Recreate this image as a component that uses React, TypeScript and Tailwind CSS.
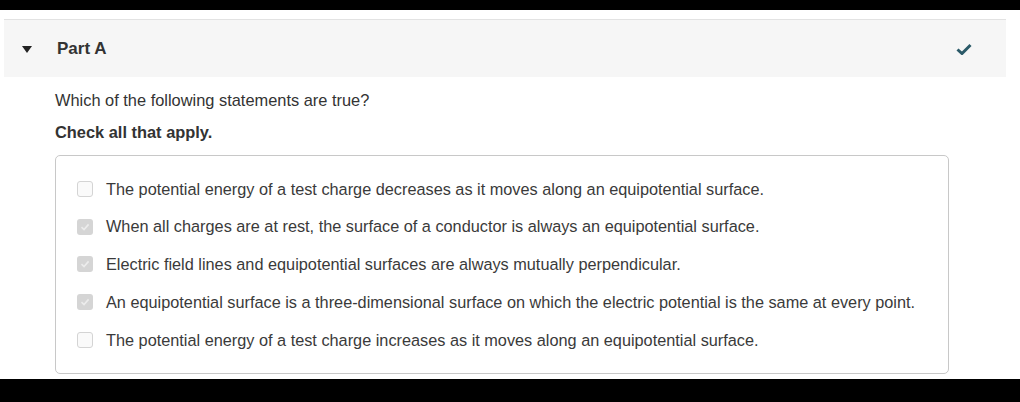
const options = [
  { text: 'The potential energy of a test charge decreases as it moves along an equipotential surface.', checked: false },
  { text: 'When all charges are at rest, the surface of a conductor is always an equipotential surface.', checked: true },
  { text: 'Electric field lines and equipotential surfaces are always mutually perpendicular.', checked: true },
  { text: 'An equipotential surface is a three-dimensional surface on which the electric potential is the same at every point.', checked: true },
  { text: 'The potential energy of a test charge increases as it moves along an equipotential surface.', checked: false },
];

function Box({ checked }: { checked: boolean }) {
  if (!checked) {
    return <span className="w-4 h-4 shrink-0 rounded-[3px] border border-[#d4d4d4] bg-[#fafafa]" />;
  }
  return (
    <span className="w-4 h-4 shrink-0 rounded-[3px] bg-[#d5d5d5] flex items-center justify-center">
      <svg viewBox="0 0 12 12" className="w-3 h-3">
        <path d="M2.5 6.2 L5 8.6 L9.6 3.4" fill="none" stroke="#ececec" strokeWidth="1.6" />
      </svg>
    </span>
  );
}

export default function App() {
  return (
    <div className="w-[1020px] h-[402px] bg-white flex flex-col font-['Liberation_Sans',Arial,sans-serif] text-[#333]">
      <div className="h-[10px] bg-black shrink-0" />
      <div className="flex-1 pt-[9px]">
        {/* collapsible part header */}
        <div className="ml-[4px] w-[1002px] h-[58px] bg-[#f6f6f6] border-t border-[#e2e2e2] flex items-center pl-[18px] pr-[34px]">
          <svg viewBox="0 0 10 7" className="w-[10px] h-[7px] mt-[1px]">
            <path d="M0 0 L10 0 L5 7 Z" fill="#222" />
          </svg>
          <span className="ml-[25px] text-[17px] font-bold text-[#333]">Part A</span>
          <svg viewBox="0 0 16 12" className="ml-auto w-[16px] h-[12px]">
            <path d="M1.5 6.5 L6 10.5 L14.5 2" fill="none" stroke="#2b5a68" strokeWidth="3" />
          </svg>
        </div>

        <div className="pl-[55px] pt-[14px]">
          <p className="text-[16.4px] leading-[18px] text-[#333]">Which of the following statements are true?</p>
          <p className="mt-[14px] text-[16.4px] leading-[18px] font-bold text-[#333]">Check all that apply.</p>

          <div className="mt-[14px] w-[894px] h-[219px] rounded-[5px] border border-[#c8c8c8] pt-[14px] pl-[21px]">
            {options.map((o) => (
              <div key={o.text} className="h-[37.8px] flex items-center gap-[13px]">
                <Box checked={o.checked} />
                <span className="text-[16.3px] text-[#3a3a3a] whitespace-nowrap">{o.text}</span>
              </div>
            ))}
          </div>
        </div>
      </div>
      <div className="h-[23px] bg-black shrink-0" />
    </div>
  );
}
